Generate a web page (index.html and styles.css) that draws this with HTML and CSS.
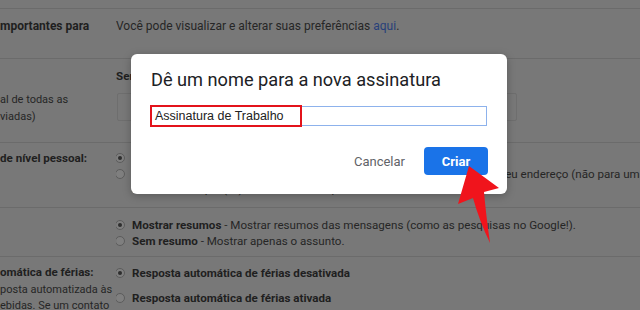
FILE: index.html
```html
<!DOCTYPE html>
<html lang="pt">
<head>
<meta charset="utf-8">
<link rel="stylesheet" href="styles.css">
</head>
<body>
<div class="page">
  <div class="settings">
    <div class="row row-top"></div>

    <div class="row row-imp">
      <div class="label"><div class="b">mportantes para</div></div>
      <div class="content"><span>Você pode visualizar e alterar suas preferências <a class="link">aqui</a>.</span></div>
    </div>

    <div class="row row-sig">
      <div class="label">
        <div class="small l1">al de todas as</div>
        <div class="small l2">viadas)</div>
      </div>
      <div class="content">
        <div class="b">Sem assinatura</div>
        <div class="sigbox"></div>
      </div>
    </div>

    <div class="row row-ind">
      <div class="label"><div class="b">de nível pessoal:</div></div>
      <div class="content">
        <div class="opt"><span class="radio on"></span><span><b>Nenhum indicador</b></span></div>
        <div class="opt"><span class="radio"></span><span><b>Mostrar indicadores</b> - Exibe a seta ao lado de mensagens enviadas ao meu endereço (não para uma lista de e-mails)</span></div>
        <div class="opt cont"><span>e uma seta dupla ( » ) nas enviadas só para mim.</span></div>
      </div>
    </div>

    <div class="row row-sum">
      <div class="label"></div>
      <div class="content">
        <div class="opt"><span class="radio on"></span><span><b>Mostrar resumos</b> - Mostrar resumos das mensagens (como as pesquisas no Google!).</span></div>
        <div class="opt"><span class="radio"></span><span><b>Sem resumo</b> - Mostrar apenas o assunto.</span></div>
      </div>
    </div>

    <div class="row row-vac">
      <div class="label">
        <div class="b">omática de férias:</div>
        <div class="small v1">posta automatizada às</div>
        <div class="small v2">ebidas. Se um contato</div>
      </div>
      <div class="content">
        <div class="opt"><span class="radio on"></span><span><b>Resposta automática de férias desativada</b></span></div>
        <div class="opt v-on"><span class="radio"></span><span><b>Resposta automática de férias ativada</b></span></div>
      </div>
    </div>
  </div>

  <div class="dialog">
    <div class="title">Dê um nome para a nova assinatura</div>
    <div class="field">
      <div class="input">Assinatura de Trabalho</div>
      <div class="highlight"></div>
    </div>
    <div class="actions">
      <span class="btn cancel">Cancelar</span>
      <span class="btn create">Criar</span>
    </div>
  </div>

  <svg class="arrow" width="640" height="310" viewBox="0 0 640 310">
    <path d="M469 166 L499 188 L484 192 Q486 215 490 243 Q479 220 473 198 L458 204 Z" fill="#f0141c"/>
  </svg>
</div>
</body>
</html>
```

FILE: styles.css
```css
* { box-sizing: border-box; }
html, body {
  margin: 0;
  padding: 0;
}
body {
  width: 640px;
  height: 310px;
  overflow: hidden;
  background: #787878;
  font-family: Roboto, "Liberation Sans", Arial, sans-serif;
  color: #222222;
}
.page {
  position: relative;
  width: 640px;
  height: 310px;
  overflow: hidden;
}
.settings {
  display: flex;
  flex-direction: column;
}
.row {
  display: grid;
  grid-template-columns: 116px 524px;
  border-bottom: 1px solid #6b6b6b;
  font-size: 11.6px;
  line-height: 16px;
}
.row-top { height: 9px; display: block; }
.row-imp { height: 50px; padding-top: 9px; font-size: 12px; }
.row-sig { height: 84px; padding-top: 9px; }
.row-ind { height: 65px; padding-top: 7px; }
.row-sum { height: 49px; padding-top: 9px; }
.row-vac { height: 80px; padding-top: 7px; border-bottom: none; }

.label { white-space: nowrap; overflow: hidden; }
.b { font-weight: 700; color: #1f1f1f; }
.small { font-size: 11px; color: #262626; line-height: 16px; }
.l1 { margin-top: 24px; }
.l2 { margin-top: 1px; }
.v1 { margin-top: 2px; }
.v2 { margin-top: 0px; }

.content { color: #262626; white-space: nowrap; overflow: hidden; }
.link { color: #27407a; }
.sigbox {
  margin-top: 9px;
  margin-left: 1px;
  width: 400px;
  height: 28px;
  border: 1px solid #6e6e6e;
  border-radius: 2px;
}
.opt {
  display: flex;
  align-items: center;
  gap: 7px;
  height: 16px;
  margin-left: -1px;
  flex-wrap: nowrap;
}
.opt > span { flex: none; }
.opt b { color: #1f1f1f; }
.opt.cont { padding-left: 17px; margin-top: -1px; }
.row-vac .opt { height: 17px; }
.v-on { margin-top: 8px; }
.radio {
  width: 10px;
  height: 10px;
  border-radius: 50%;
  border: 1px solid #5c5c5c;
  background: #7f7f7f;
  position: relative;
}
.radio.on::after {
  content: "";
  position: absolute;
  left: 2px;
  top: 2px;
  width: 4px;
  height: 4px;
  border-radius: 50%;
  background: #2e2e2e;
}

.dialog {
  position: absolute;
  left: 131px;
  top: 54px;
  width: 376px;
  height: 140px;
  background: #ffffff;
  border-radius: 6px;
  box-shadow: 0 2px 8px rgba(0,0,0,0.25);
  padding: 13px 20px 0 20px;
  display: flex;
  flex-direction: column;
}
.title {
  font-family: Roboto, "Open Sans", sans-serif;
  font-size: 18.2px;
  line-height: 26px;
  color: #202124;
  white-space: nowrap;
}
.field {
  position: relative;
  margin-top: 13px;
}
.input {
  height: 20px;
  width: 336px;
  border: 1px solid #8db2ec;
  font-family: "Liberation Sans", Arial, sans-serif;
  font-size: 12.5px;
  line-height: 18px;
  padding-left: 3px;
  color: #222;
}
.highlight {
  position: absolute;
  left: -1px;
  top: -1px;
  width: 152px;
  height: 22px;
  border: 2px solid #e3131b;
}
.actions {
  display: flex;
  justify-content: flex-end;
  align-items: center;
  margin-top: 21px;
  gap: 19px;
}
.btn {
  font-family: Roboto, sans-serif;
  font-size: 13px;
  display: inline-flex;
  align-items: center;
  justify-content: center;
  height: 28px;
}
.cancel { color: #5f6368; }
.create {
  width: 64px;
  background: #1a73e8;
  color: #ffffff;
  font-weight: 700;
  border-radius: 4px;
  margin-right: -1px;
}
.arrow {
  position: absolute;
  left: 0;
  top: 0;
}
```
